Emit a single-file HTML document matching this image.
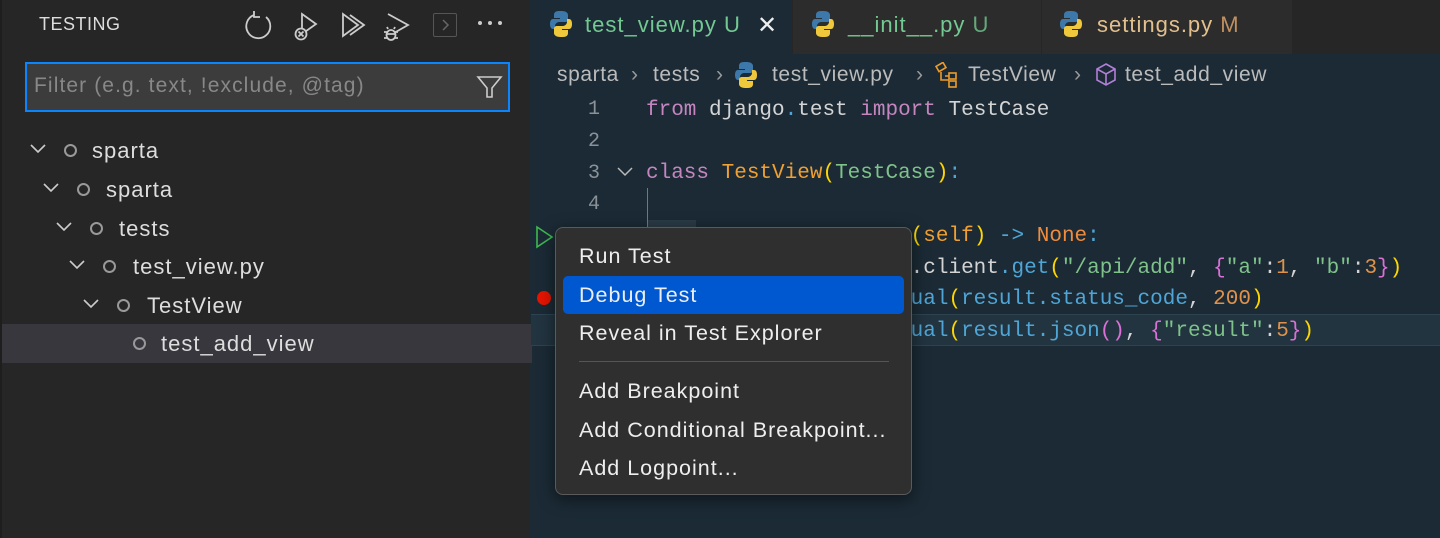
<!DOCTYPE html>
<html><head><meta charset="utf-8"><style>
*{margin:0;padding:0;box-sizing:border-box}
body{width:1440px;height:538px;overflow:hidden;background:#1b2a35;font-family:"Liberation Sans",sans-serif;position:relative}
.side{position:absolute;left:0;top:0;width:530px;height:538px;background:#262626;border-left:2px solid #1e1e1e}
.abs{position:absolute}
.t{color:#ccc;font-size:21px;white-space:nowrap}
.ls{letter-spacing:1px}
.row{position:absolute;left:0;width:530px;height:39px}
.row .chev{position:absolute;top:11px}
.row .circ{position:absolute;top:13px;width:13px;height:13px;border:2px solid #999;border-radius:50%}
.row .lbl{position:absolute;top:7px;font-size:22px;color:#ddd;letter-spacing:1px}
.code{font-family:"Liberation Mono",monospace;font-size:21px;white-space:pre;position:absolute;left:646px;color:#d4d4d4}
.ln{font-family:"Liberation Mono",monospace;font-size:20px;color:#8a9199;position:absolute;width:40px;text-align:right;left:560px}
.k{color:#c586c0}.c{color:#f0a030}.g{color:#7fc28a}.b{color:#4fa6d6}.y{color:#ffd700}.p{color:#da70d6}.o{color:#f08c3c}.n{color:#e0924a}
.menu{position:absolute;left:555px;top:227px;width:357px;height:268px;background:#2f2f2f;border:1px solid #5a5a5a;border-radius:8px;box-shadow:0 4px 16px rgba(0,0,0,.5)}
.mi{position:absolute;left:23px;font-size:21.5px;color:#eee;white-space:nowrap;letter-spacing:1px}
.bc{position:absolute;top:63px;font-size:21px;color:#bbb;white-space:nowrap;letter-spacing:.6px}
.sep{position:absolute;top:63px;font-size:21px;color:#999}
</style></head><body>
<div class="side">
  <div class="abs t" style="left:37px;top:14px;font-size:18px;color:#ddd;letter-spacing:.5px">TESTING</div>
  <svg class="abs" style="left:240px;top:8px" width="270" height="34" viewBox="0 0 270 34" fill="none" stroke="#ccc" stroke-width="1.8">
    <path d="M12 7 A12 12 0 1 0 24 9"/><path d="M12 3 L12 9 L18 9"/>
    <path d="M60 6 L74 16 L60 26 Z"/><circle cx="59" cy="26" r="5.5" fill="#262626"/><path d="M56.5 23.5l5 5M61.5 23.5l-5 5"/>
    <path d="M101 6 L101 28 L116 17 Z"/><path d="M108 7 L122 17 L108 27"/>
    <path d="M146 6 L166 17 L152 25"/><ellipse cx="149" cy="27" rx="4.5" ry="5" fill="#262626"/><path d="M142 24h3M153 24h3M142 30h3M153 30h3M146 21l-1-2M152 21l1-2M145 26h8"/>
  </svg>
  <div class="abs" style="left:431px;top:13px;width:24px;height:24px;border:1.5px solid #555;border-radius:2px"></div>
  <svg class="abs" style="left:431px;top:13px" width="24" height="24"><path d="M10 7l5 5-5 5" stroke="#666" stroke-width="1.5" fill="none"/></svg>
  <svg class="abs" style="left:474px;top:18px" width="28" height="10"><circle cx="4" cy="5" r="2" fill="#ccc"/><circle cx="14" cy="5" r="2" fill="#ccc"/><circle cx="24" cy="5" r="2" fill="#ccc"/></svg>
  <div class="abs" style="left:23px;top:62px;width:485px;height:50px;background:#3c3c3c;border:2px solid #0a84ff"></div>
  <div class="abs t" style="left:32px;top:74px;color:#888;letter-spacing:1.1px">Filter (e.g. text, !exclude, @tag)</div>
  <svg class="abs" style="left:474px;top:74px" width="28" height="26"><path d="M2 3h23l-9 11v9h-5v-9z" stroke="#ccc" stroke-width="1.6" fill="none"/></svg>

  <div class="row" style="top:131px"><svg class="chev" style="left:27px" width="18" height="14"><path d="M2 3l7 7 7-7" stroke="#ccc" stroke-width="1.6" fill="none"/></svg><div class="circ" style="left:62px"></div><div class="lbl" style="left:90px">sparta</div></div>
  <div class="row" style="top:170px"><svg class="chev" style="left:40px" width="18" height="14"><path d="M2 3l7 7 7-7" stroke="#ccc" stroke-width="1.6" fill="none"/></svg><div class="circ" style="left:75px"></div><div class="lbl" style="left:104px">sparta</div></div>
  <div class="row" style="top:209px"><svg class="chev" style="left:53px" width="18" height="14"><path d="M2 3l7 7 7-7" stroke="#ccc" stroke-width="1.6" fill="none"/></svg><div class="circ" style="left:88px"></div><div class="lbl" style="left:117px">tests</div></div>
  <div class="row" style="top:247px"><svg class="chev" style="left:66px" width="18" height="14"><path d="M2 3l7 7 7-7" stroke="#ccc" stroke-width="1.6" fill="none"/></svg><div class="circ" style="left:101px"></div><div class="lbl" style="left:131px">test_view.py</div></div>
  <div class="row" style="top:286px"><svg class="chev" style="left:80px" width="18" height="14"><path d="M2 3l7 7 7-7" stroke="#ccc" stroke-width="1.6" fill="none"/></svg><div class="circ" style="left:115px"></div><div class="lbl" style="left:145px">TestView</div></div>
  <div class="row" style="top:324px;background:#37373d"><div class="circ" style="left:131px"></div><div class="lbl" style="left:159px">test_add_view</div></div>
</div>

<!-- tabs -->
<div class="abs" style="left:530px;top:0;width:910px;height:54px;background:#262626"></div>
<div class="abs" style="left:530px;top:0;width:262px;height:54px;background:#1b2a35"></div>
<div class="abs" style="left:793px;top:0;width:248px;height:54px;background:#2c2c2c"></div>
<div class="abs" style="left:1042px;top:0;width:250px;height:54px;background:#2c2c2c"></div>
<svg width="0" height="0" style="position:absolute"><defs><g id="py"><path d="M9 1c-4 0-5 2-5 4v3h6v1H3C1 9 0 11 0 14s1 5 3 5h2v-3c0-2 2-4 4-4h6c2 0 3-1 3-3V5c0-2-2-4-6-4z" fill="#3c78aa"/><path d="M13 27c4 0 5-2 5-4v-3h-6v-1h7c2 0 3-2 3-5s-1-5-3-5h-2v3c0 2-2 4-4 4H7c-2 0-3 1-3 3v4c0 2 2 4 6 4z" fill="#f0c83c"/></g></defs></svg>
<svg class="abs" style="left:550px;top:10px" width="24" height="30"><use href="#py"/></svg>
<div class="abs t ls" style="left:585px;top:12px;font-size:22px;color:#73c991">test_view.py&nbsp;U</div>
<div class="abs t" style="left:757px;top:11px;font-size:24px;color:#eee">✕</div>
<svg class="abs" style="left:812px;top:10px" width="24" height="30"><use href="#py"/></svg>
<div class="abs t ls" style="left:848px;top:12px;font-size:22px;color:#73c991">__init__.py&nbsp;<span style="opacity:.8">U</span></div>
<svg class="abs" style="left:1060px;top:10px" width="24" height="30"><use href="#py"/></svg>
<div class="abs t ls" style="left:1097px;top:12px;font-size:22px;color:#e2c08d">settings.py&nbsp;<span style="color:#c09060">M</span></div>

<!-- breadcrumbs -->
<div class="bc" style="left:557px">sparta</div><div class="sep" style="left:631px">›</div>
<div class="bc" style="left:653px">tests</div><div class="sep" style="left:716px">›</div>
<svg class="abs" style="left:735px;top:61px" width="24" height="30"><use href="#py"/></svg>
<div class="bc" style="left:772px">test_view.py</div><div class="sep" style="left:916px">›</div>
<svg class="abs" style="left:935px;top:62px" width="28" height="26" fill="none" stroke="#ee9d28" stroke-width="1.6"><rect x="2" y="2" width="8" height="6" transform="rotate(-30 6 5)"/><rect x="14" y="11" width="7" height="6"/><rect x="14" y="19" width="7" height="6"/><path d="M6 10v8h8M10 14h4"/></svg>
<div class="bc" style="left:968px">TestView</div><div class="sep" style="left:1074px">›</div>
<svg class="abs" style="left:1094px;top:62px" width="24" height="26" fill="none" stroke="#b180d7" stroke-width="1.6"><path d="M12 2l9 5v11l-9 5-9-5V7zM3 7l9 5 9-5M12 12v11"/></svg>
<div class="bc" style="left:1125px">test_add_view</div>

<!-- code -->
<div class="abs" style="left:531px;top:314px;width:909px;height:32px;background:#223440;border-top:1px solid #2e4350;border-bottom:1px solid #2e4350"></div>
<div class="ln" style="top:98px">1</div><div class="ln" style="top:130px">2</div><div class="ln" style="top:162px">3</div><div class="ln" style="top:193px">4</div>
<svg class="abs" style="left:616px;top:165px" width="18" height="14"><path d="M2 3l7 7 7-7" stroke="#bbb" stroke-width="1.5" fill="none"/></svg>
<div class="abs" style="left:647px;top:188px;width:1px;height:40px;background:#777"></div>
<div class="abs" style="left:648px;top:220px;width:48px;height:8px;background:#2a3a45"></div>
<div class="code" style="top:99px"><span class="k">from</span> django<span class="b">.</span>test <span class="k">import</span> TestCase</div>
<div class="code" style="top:162px"><span class="k">class</span> <span class="c">TestView</span><span class="y">(</span><span class="g">TestCase</span><span class="y">)</span><span class="b">:</span></div>
<div class="code" style="top:225px">                     <span class="y">(</span><span class="c">self</span><span class="y">)</span> <span class="b">-&gt;</span> <span class="o">None</span><span class="b">:</span></div>
<div class="code" style="top:257px">                     <span>.client</span><span class="b">.get</span><span class="y">(</span><span class="g">"/api/add"</span>, <span class="p">{</span><span class="g">"a"</span>:<span class="n">1</span>, <span class="g">"b"</span>:<span class="n">3</span><span class="p">}</span><span class="y">)</span></div>
<div class="code" style="top:288px">                     <span class="b">ual</span><span class="y">(</span><span class="b">result.status_code</span>, <span class="n">200</span><span class="y">)</span></div>
<div class="code" style="top:320px">                     <span class="b">ual</span><span class="y">(</span><span class="b">result.json</span><span class="p">()</span>, <span class="p">{</span><span class="g">"result"</span>:<span class="n">5</span><span class="p">}</span><span class="y">)</span></div>
<svg class="abs" style="left:535px;top:225px" width="20" height="24"><path d="M2 2l15 10-15 10z" stroke="#3fb950" stroke-width="1.6" fill="none"/></svg>
<div class="abs" style="left:537px;top:291px;width:14px;height:14px;border-radius:50%;background:#e51400"></div>

<div class="menu">
  <div class="mi" style="top:16px">Run Test</div>
  <div class="abs" style="left:7px;top:48px;width:341px;height:38px;background:#0058d0;border-radius:5px"></div>
  <div class="mi" style="top:55px">Debug Test</div>
  <div class="mi" style="top:93px">Reveal in Test Explorer</div>
  <div class="abs" style="left:23px;top:133px;width:310px;height:1px;background:#555"></div>
  <div class="mi" style="top:151px">Add Breakpoint</div>
  <div class="mi" style="top:190px">Add Conditional Breakpoint...</div>
  <div class="mi" style="top:228px">Add Logpoint...</div>
</div>
</body></html>
